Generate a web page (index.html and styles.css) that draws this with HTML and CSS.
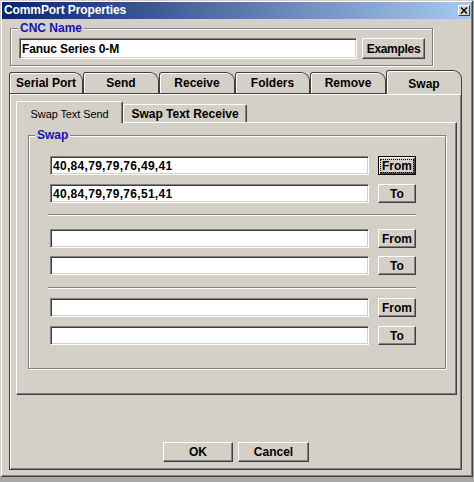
FILE: index.html
```html
<!DOCTYPE html>
<html>
<head>
<meta charset="utf-8">
<title>CommPort Properties</title>
<link rel="stylesheet" href="styles.css">
</head>
<body>
<div class="window">
  <div class="titlebar">
    <span class="title">CommPort Properties</span>
    <div class="close">
      <svg width="8" height="7" viewBox="0 0 8 7"><path d="M1 0.5L7 6.5M7 0.5L1 6.5" stroke="#000" stroke-width="1.4" fill="none"/></svg>
    </div>
  </div>

  <div class="group cnc">
    <span class="legend">CNC Name</span>
    <div class="input cnc-input">Fanuc Series 0-M</div>
    <div class="btn examples">Examples</div>
  </div>

  <div class="tabs">
    <div class="tab t-serial">Serial Port</div>
    <div class="tab t-send">Send</div>
    <div class="tab t-receive">Receive</div>
    <div class="tab t-folders">Folders</div>
    <div class="tab t-remove">Remove</div>
    <div class="tab t-swap active">Swap</div>
  </div>

  <div class="panel">
    <div class="subtabs">
      <div class="subtab st-send active">Swap Text Send</div>
      <div class="subtab st-receive">Swap Text Receive</div>
    </div>
    <div class="subpanel">
      <div class="group swap">
        <span class="legend">Swap</span>
        <div class="row r1">
          <div class="input swap-input">40,84,79,79,76,49,41</div>
          <div class="btn small focused"><span class="focus">From</span></div>
        </div>
        <div class="row r2">
          <div class="input swap-input">40,84,79,79,76,51,41</div>
          <div class="btn small">To</div>
        </div>
        <div class="sep s1"></div>
        <div class="row r3">
          <div class="input swap-input"></div>
          <div class="btn small">From</div>
        </div>
        <div class="row r4">
          <div class="input swap-input"></div>
          <div class="btn small">To</div>
        </div>
        <div class="sep s2"></div>
        <div class="row r5">
          <div class="input swap-input"></div>
          <div class="btn small">From</div>
        </div>
        <div class="row r6">
          <div class="input swap-input"></div>
          <div class="btn small">To</div>
        </div>
      </div>
    </div>
    <div class="actions">
      <div class="btn ok">OK</div>
      <div class="btn cancel">Cancel</div>
    </div>
  </div>
</div>
</body>
</html>
```

FILE: styles.css
```css
* { box-sizing: border-box; }
html, body { margin: 0; padding: 0; }
body {
  background: #a8a8a8;
  width: 474px;
  height: 482px;
  overflow: hidden;
  font-family: "Liberation Sans", Arial, sans-serif;
  font-size: 12px;
  font-weight: bold;
  color: #000;
}
.window {
  width: 473px;
  height: 477px;
  background: #d4d0c8;
  padding: 2px;
  box-shadow: inset 1px 1px #d4d0c8, inset -1px -1px #404040, inset 2px 2px #fff, inset -2px -2px #808080;
}
.titlebar {
  height: 17px;
  display: flex;
  align-items: center;
  padding-left: 2px;
  background: linear-gradient(to right, #0a246a, #a6caf0);
  color: #fff;
}
.title { line-height: 17px; letter-spacing: -0.1px; }
.close {
  margin-left: auto;
  margin-right: 1px;
  width: 12px;
  height: 11px;
  background: #d4d0c8;
  border: 1px solid;
  border-color: #fff #404040 #404040 #fff;
  display: flex;
  align-items: center;
  justify-content: center;
}
.close svg { display: block; }

.group {
  position: relative;
  border: 1px solid #808080;
  box-shadow: inset 1px 1px #fff, 1px 1px #fff;
}
.legend {
  position: absolute;
  top: -8px;
  line-height: 14px;
  padding: 0 2px;
  background: #d4d0c8;
  color: #1414b4;
}
.cnc {
  margin: 9px 0 0 8px;
  width: 423px;
  height: 38px;
  padding: 9px 0 0 8px;
  display: flex;
  gap: 5px;
  align-items: flex-start;
}
.cnc .legend { left: 7px; }

.input {
  background: #fff;
  border: 1px solid;
  border-color: #808080 #fff #fff #808080;
  box-shadow: inset 1px 1px #404040, inset -1px -1px #d4d0c8;
  padding-left: 2px;
  display: flex;
  align-items: center;
  white-space: nowrap;
}
.cnc-input { width: 338px; height: 21px; letter-spacing: -0.1px; }

.btn {
  background: #d4d0c8;
  border: 1px solid;
  border-color: #fff #404040 #404040 #fff;
  box-shadow: inset -1px -1px #808080;
  display: flex;
  align-items: center;
  justify-content: center;
  white-space: nowrap;
}
.examples { width: 63px; height: 21px; letter-spacing: -0.3px; }

.tabs {
  display: flex;
  align-items: flex-end;
  height: 23px;
  margin: 4px 0 0 7px;
}
.tab {
  height: 21px;
  display: flex;
  align-items: center;
  justify-content: center;
  background: #d4d0c8;
  border: 1px solid #404040;
  border-bottom: none;
  border-radius: 3px 9px 0 0;
  box-shadow: inset 1px 1px #fff;
}
.tab.active {
  height: 24px;
  margin-bottom: -1px;
  position: relative;
  z-index: 1;
  padding-top: 3px;
}
.t-serial { width: 74px; }
.t-send { width: 76px; }
.t-receive { width: 76px; }
.t-folders { width: 75px; }
.t-remove { width: 76px; }
.t-swap { width: 76px; }

.panel {
  margin-left: 7px;
  width: 453px;
  height: 377px;
  border: 1px solid #404040;
  box-shadow: inset 1px 1px #fff, inset -1px -1px #808080;
  padding: 7px 0 0 6px;
  display: flex;
  flex-direction: column;
}
.subtabs {
  display: flex;
  align-items: flex-end;
  height: 21px;
}
.subtab {
  height: 18px;
  background: #d4d0c8;
  border: 1px solid;
  border-color: #fff #404040 transparent #fff;
  border-bottom: none;
  border-radius: 2px 2px 0 0;
  box-shadow: inset -1px 0 #808080;
  display: flex;
  justify-content: center;
  padding-top: 2px;
  line-height: 14px;
}
.subtab.active {
  height: 22px;
  margin-bottom: -1px;
  position: relative;
  z-index: 1;
  font-weight: normal;
  font-size: 11px;
  letter-spacing: -0.1px;
  padding-top: 5px;
}
.st-send { width: 107px; }
.st-receive { width: 124px; }

.subpanel {
  width: 441px;
  height: 273px;
  border: 1px solid;
  border-color: #fff #404040 #404040 #fff;
  box-shadow: inset -1px -1px #808080;
  padding: 12px 0 0 11px;
}
.swap {
  width: 418px;
  height: 234px;
  padding: 20px 0 0 21px;
}
.swap .legend { left: 6px; }

.row {
  display: flex;
  align-items: flex-start;
  gap: 9px;
}
.swap-input { width: 319px; height: 19px; letter-spacing: 0.3px; }
.small { width: 38px; height: 19px; }
.focused {
  border: 1px solid #000;
  box-shadow: inset 1px 1px #fff, inset -1px -1px #404040, inset -2px -2px #808080;
}
.focus {
  outline: 1px dotted #000;
  outline-offset: 0;
  padding: 0 1px;
  line-height: 12px;
}
.r2 { margin-top: 9px; }
.r3 { margin-top: 13px; }
.r4 { margin-top: 8px; }
.r5 { margin-top: 9px; }
.r6 { margin-top: 9px; }
.sep {
  height: 2px;
  width: 368px;
  margin-left: -2px;
  border-top: 1px solid #808080;
  border-bottom: 1px solid #fff;
}
.s1 { margin-top: 11px; }
.s2 { margin-top: 12px; }

.actions {
  display: flex;
  gap: 5px;
  margin: 47px 0 0 147px;
}
.ok { width: 70px; height: 20px; }
.cancel { width: 71px; height: 20px; }
```
